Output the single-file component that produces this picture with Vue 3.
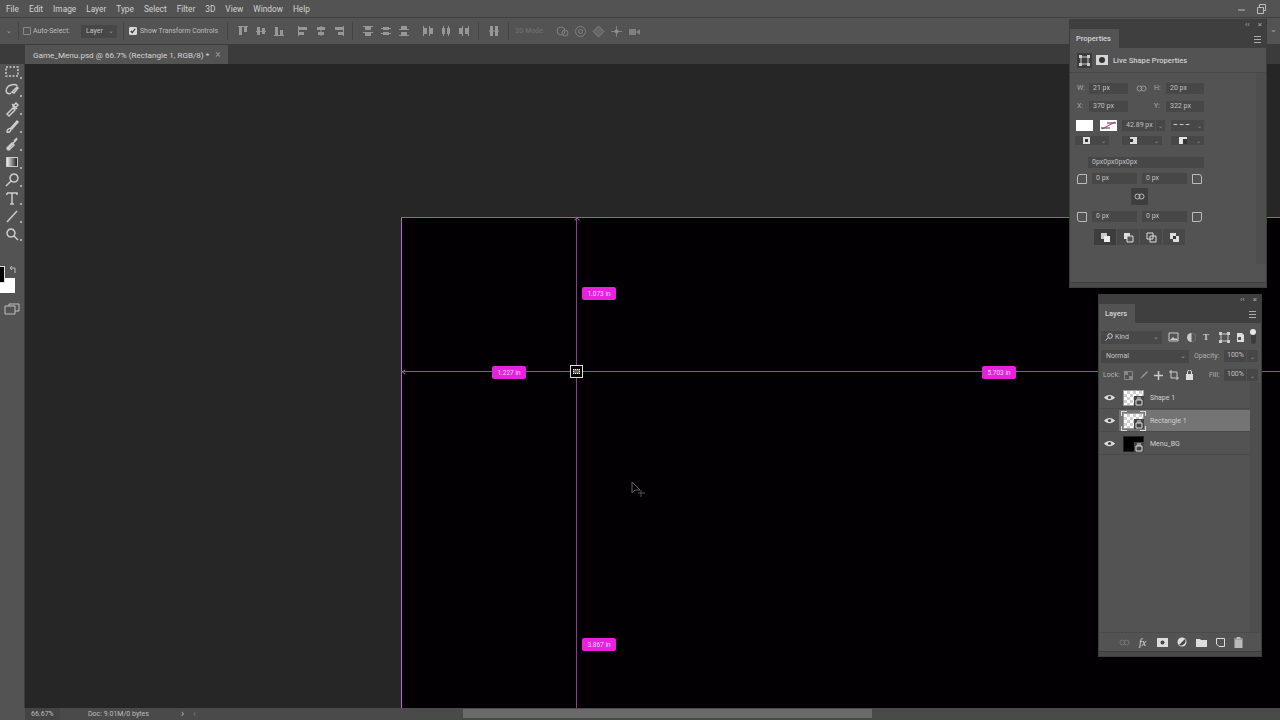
<script setup>
const menus = ['File', 'Edit', 'Image', 'Layer', 'Type', 'Select', 'Filter', '3D', 'View', 'Window', 'Help']

// align / distribute icons of the options bar
const alignGroups = [
  { cls: '', icons: ['M1 1h10v1H1zM2 2h3v8H2zM7 2h3v5H7z', 'M1 6h10v1H1zM2 2h3v8H2zM7 3h3v6H7z', 'M1 10h10v1H1zM2 2h3v8H2zM7 5h3v5H7z'] },
  { cls: 'end', sep: true, icons: ['M1 1h1v10H1zM2 2h8v3H2zM2 7h5v3H2z', 'M5.500 1h1v10h-1zM2 2h8v3H2zM3 7h6v3H3z', 'M10 1h1v10h-1zM2 2h8v3H2zM5 7h5v3H5z'] },
  { cls: '', icons: ['M1 1h10v1H1zM3 2h6v3H3zM1 7h10v1H1zM3 8h6v3H3z', 'M1 3h10v1H1zM3 2h6v3H3zM1 8h10v1H1zM3 7h6v3H3z', 'M1 4h10v1H1zM3 1h6v3H3zM1 10h10v1H1zM3 7h6v3H3z'] },
  { cls: 'end2', sep: true, icons: ['M1 1h1v10H1zM2 3h3v6H2zM7 1h1v10H7zM8 3h3v6H8z', 'M3 1h1v10H3zM2 3h3v6H2zM8 1h1v10H8zM7 3h3v6H7z', 'M4 1h1v10H4zM1 3h3v6H1zM10 1h1v10h-1zM7 3h3v6H7z'] },
  { cls: 'end2', sep: true, icons: ['M2 1h3v10H2zM7 1h3v10H7zM1 5.500h10v1H1z'] }
]

const tools = [
  { k: 'marquee', d: 'M3 4h12v9H3z', dash: true },
  { k: 'lasso', d: 'M4 12c-2-3 0-7 4-8s6 0 6 1M4 12c2 1 3 1 4 0M9 11l5-5 1 1-4 5z' },
  { k: 'drop', d: 'M4 15l6-6 2 2-6 6zM10 7l3-3 2 2-3 3zM9 5l5 5' },
  { k: 'brush', d: 'M4 15c0-3 2-4 4-3 0 2-2 4-4 3zM8 11l6-7 1 1-6 7z' },
  { k: 'heal', d: 'M4 13l5-5 2 2-5 5zM14 4L4 15M11 6l3-3' },
  { k: 'grad', d: '' },
  { k: 'dodge', d: 'M3 15l5-5M11 3a4 4 0 1 1-.01 0' },
  { k: 'type', d: 'M4 4h10v2M4 4v2M9 4v11M7 15h4' },
  { k: 'line', d: 'M4 15L14 4' },
  { k: 'zoom', d: 'M8 4a4 4 0 1 1-.01 0M11 11l4 4' }
]

const measures = [
  { text: '1.073 in', cls: 'm-top' },
  { text: '1.227 in', cls: 'm-left' },
  { text: '5.703 in', cls: 'm-right' },
  { text: '3.867 in', cls: 'm-bottom' }
]

const layers = [
  { name: 'Shape 1', thumb: 'checker' },
  { name: 'Rectangle 1', thumb: 'checker', active: true },
  { name: 'Menu_BG', thumb: 'dark' }
]
</script>

<template>
  <div class="app">
    <header class="menubar">
      <span v-for="m in menus" :key="m" class="menu-item">{{ m }}</span>
      <span class="win-btns">
        <svg width="40" height="14" viewBox="0 0 40 14"><path d="M4 8h7" stroke="#bbb" fill="none"/><path d="M23.500 5.500h6v6h-6zM25.500 5.500v-3h6v6h-2" stroke="#bbb" fill="none"/></svg>
      </span>
    </header>

    <div class="optbar">
      <span class="opt-caret">⌄</span>
      <i class="vsep"></i>
      <span class="check first"></span>
      <span class="opt-label auto">Auto-Select:</span>
      <span class="select layer-sel">Layer<em>⌄</em></span>
      <i class="vsep"></i>
      <span class="check on"><svg width="8" height="8" viewBox="0 0 8 8"><path d="M1 4l2 2 4-5" stroke="#333" stroke-width="1.600" fill="none"/></svg></span>
      <span class="opt-label show">Show Transform Controls</span>
      <i class="vsep sep-show"></i>
      <template v-for="(g, n) in alignGroups" :key="n">
        <span class="align-group" :class="g.cls">
          <svg v-for="d in g.icons" :key="d" width="12" height="12" viewBox="0 0 12 12"><path :d="d" fill="#979797"/></svg>
        </span>
        <i v-if="g.sep" class="vsep after-group"></i>
      </template>
      <span class="mode3d">3D Mode:</span>
      <span class="icons3d">
        <svg width="13" height="13" viewBox="0 0 13 13"><circle cx="5" cy="6" r="4" stroke="#808080" fill="none"/><circle cx="9" cy="8" r="3" stroke="#808080" fill="none"/></svg>
        <svg width="13" height="13" viewBox="0 0 13 13"><circle cx="6.500" cy="6.500" r="5" stroke="#808080" fill="none"/><circle cx="6.500" cy="6.500" r="2" stroke="#808080" fill="none"/></svg>
        <svg width="13" height="13" viewBox="0 0 13 13"><path d="M6.500 1l5.500 5.500-5.500 5.500L1 6.500z" stroke="#808080" fill="#666"/></svg>
        <svg width="13" height="13" viewBox="0 0 13 13"><path d="M6.500 1v11M1 6.500h11" stroke="#808080"/><circle cx="6.500" cy="6.500" r="2" fill="#909090"/></svg>
        <svg width="13" height="13" viewBox="0 0 13 13"><path d="M1 4h7v6H1zM8 7l4-3v6z" fill="#808080"/></svg>
      </span>
      <span class="opt-end">⌄</span>
    </div>

    <div class="tabbar">
      <div class="doc-tab">Game_Menu.psd @ 66.7% (Rectangle 1, RGB/8) * <span class="tab-x">×</span></div>
    </div>

    <div class="main">
      <aside class="toolbar">
        <div v-for="t in tools" :key="t.k" class="tool">
          <span v-if="t.k === 'grad'" class="grad-icon"></span>
          <svg v-else width="18" height="18" viewBox="0 1 18 18">
            <path :d="t.d" fill="none" stroke="#cdcdcd" stroke-width="1.500" :stroke-dasharray="t.dash ? '2 1.500' : null"/>
          </svg>
        </div>
        <div class="colors">
          <span class="bg-swatch"></span>
          <span class="fg-swatch"></span>
          <svg class="swap" width="9" height="9" viewBox="0 0 9 9"><path d="M1 3h5v5M1 3l2-2M1 3l2 2" stroke="#bbb" fill="none"/></svg>
        </div>
        <svg class="screen-mode" width="16" height="12" viewBox="0 0 16 12"><path d="M1 3h10v8H1zM5 3V1h10v7h-4" stroke="#c0c0c0" fill="none"/></svg>
      </aside>

      <div class="workspace">
        <div class="canvas">
          <i class="guide guide-h"></i>
          <i class="guide guide-v"></i>
          <i class="guide guide-top"></i>
          <i class="tick tick-top"></i>
          <i class="tick tick-left"></i>
          <span class="center-mark"><i></i></span>
          <span v-for="m in measures" :key="m.cls" class="measure" :class="m.cls">{{ m.text }}</span>
          <svg class="cursor" width="18" height="18" viewBox="0 0 18 18"><path d="M1 1v11l3-3h5z" stroke="#666" fill="none"/><path d="M10 9v7M7 12h7" stroke="#555"/></svg>
        </div>

        <section class="panel props">
          <div class="panel-top">‹‹ <span>×</span></div>
          <div class="panel-tabs">
            <span class="ptab">Properties</span>
            <span class="burger"></span>
          </div>
          <div class="live-row">
            <span class="live-a">
              <svg width="11" height="11" viewBox="0 0 11 11"><path d="M2 2h7v7H2z" stroke="#ccc" fill="none"/><path d="M0 0h3v3H0zM8 0h3v3H8zM0 8h3v3H0zM8 8h3v3H8z" fill="#ccc"/></svg>
            </span>
            <span class="live-b"><i></i></span>
            <span class="live-title">Live Shape Properties</span>
          </div>
          <div class="prow first-row">
            <label>W:</label><span class="field w39">21 px</span>
            <svg class="link" width="11" height="7" viewBox="0 0 11 7"><circle cx="3.500" cy="3.500" r="2.500" stroke="#999" fill="none"/><circle cx="7.500" cy="3.500" r="2.500" stroke="#999" fill="none"/></svg>
            <label>H:</label><span class="field w38">20 px</span>
          </div>
          <div class="prow">
            <label>X:</label><span class="field w39">370 px</span>
            <label class="ylab">Y:</label><span class="field w38">322 px</span>
          </div>
          <div class="prow swatches">
            <span class="white-sw"></span>
            <span class="stroke-sw"><svg width="17" height="11" viewBox="0 0 17 11"><path d="M1 8h9M7 3h9" stroke="#333"/><path d="M2 9l13-7" stroke="#e0245e"/></svg></span>
            <span class="field w33">42.89 px</span><span class="mini">⌄</span>
            <span class="stroke-style">– – –<em>⌄</em></span>
          </div>
          <div class="prow small">
            <span class="dd d1"><b class="dot"></b><em>⌄</em></span>
            <span class="dd d2"><b class="sq"></b><em>⌄</em></span>
            <span class="dd d3"><b class="sq2"></b><em>⌄</em></span>
          </div>
          <div class="field wide">0px0px0px0px</div>
          <div class="corner-row">
            <span class="corner tl"></span><span class="field c">0 px</span><span class="field c">0 px</span><span class="corner tr"></span>
          </div>
          <div class="link-btn">
            <svg width="11" height="7" viewBox="0 0 11 7"><circle cx="3.500" cy="3.500" r="2.500" stroke="#bbb" fill="none"/><circle cx="7.500" cy="3.500" r="2.500" stroke="#bbb" fill="none"/></svg>
          </div>
          <div class="corner-row">
            <span class="corner bl"></span><span class="field c">0 px</span><span class="field c">0 px</span><span class="corner br"></span>
          </div>
          <div class="path-ops">
            <span class="op on"><svg width="11" height="11" viewBox="0 0 11 11"><path d="M1 1h6v6H1z" fill="#ccc"/><path d="M4 4h6v6H4z" fill="#eee"/></svg></span>
            <span class="op"><svg width="11" height="11" viewBox="0 0 11 11"><path d="M1 1h6v6H1z" fill="#ddd"/><path d="M4 4h6v6H4z" fill="#555" stroke="#ddd"/></svg></span>
            <span class="op"><svg width="11" height="11" viewBox="0 0 11 11"><path d="M1 1h6v6H1zM4 4h6v6H4z" fill="none" stroke="#ddd"/></svg></span>
            <span class="op"><svg width="11" height="11" viewBox="0 0 11 11"><path d="M1 1h6v6H1z" fill="#ddd"/><path d="M4 4h6v6H4z" fill="#ddd"/><path d="M4 4h3v3H4z" fill="#333"/></svg></span>
          </div>
          <i class="props-scroll"></i>
          <div class="grip"></div>
        </section>

        <section class="panel layers">
          <div class="panel-top">‹‹ <span>×</span></div>
          <div class="panel-tabs">
            <span class="ptab">Layers</span>
            <span class="burger"></span>
          </div>
          <div class="filter-row">
            <span class="select kind">
              <span class="kind-label">
                <svg width="8" height="8" viewBox="0 0 8 8"><circle cx="5" cy="3" r="2.300" stroke="#ccc" fill="none"/><path d="M3.300 4.700L.5 7.500" stroke="#ccc"/></svg>
                Kind
              </span>
              <em>⌄</em>
            </span>
            <span class="filter-icons">
              <svg width="11" height="10" viewBox="0 0 11 10"><path d="M1 1h9v8H1z" stroke="#ccc" fill="none"/><path d="M2 8l3-3 2 2 1-1 2 2z" fill="#ccc"/></svg>
              <svg width="11" height="11" viewBox="0 0 11 11"><circle cx="5.500" cy="5.500" r="4.500" fill="#ccc"/><path d="M5.500 1a4.500 4.500 0 0 1 0 9z" fill="#555"/></svg>
              <span class="t-icon">T</span>
              <svg width="11" height="11" viewBox="0 0 11 11"><path d="M2 2h7v7H2z" stroke="#ccc" fill="none"/><path d="M0 0h3v3H0zM8 0h3v3H8zM0 8h3v3H0zM8 8h3v3H8z" fill="#ccc"/></svg>
              <svg width="9" height="11" viewBox="0 0 9 11"><path d="M1 1h5l2 2v7H1z" fill="#ddd"/><path d="M2 5h3v3H2z" fill="#555"/></svg>
            </span>
            <span class="toggle"><i></i></span>
          </div>
          <div class="blend-row">
            <span class="select normal">Normal<em>⌄</em></span>
            <span class="lbl opacity-lbl">Opacity:</span>
            <span class="field pct">100%</span><span class="mini pct-mini">⌄</span>
          </div>
          <div class="lock-row">
            <span class="lbl lock-lbl">Lock:</span>
            <span class="lock-icons">
              <svg width="9" height="9" viewBox="0 0 9 9"><path d="M0 0h4v4H0zM5 5h4v4H5z" fill="#888"/><path d="M.5.500h8v8h-8z" stroke="#888" fill="none"/></svg>
              <svg width="9" height="9" viewBox="0 0 9 9"><path d="M1 8l2-3 5-5 1 1-5 5z" fill="#999"/></svg>
              <svg width="9" height="9" viewBox="0 0 9 9"><path d="M4.500 0v9M0 4.500h9" stroke="#ccc" stroke-width="1.500"/></svg>
              <svg width="10" height="10" viewBox="0 0 10 10"><path d="M2 0v8h8M0 2h8v8" stroke="#ccc" fill="none"/></svg>
              <svg width="9" height="10" viewBox="0 0 9 10"><path d="M1 4h7v6H1z" fill="#ddd"/><path d="M2.500 4V2a2 2 0 0 1 4 0v2" stroke="#ddd" fill="none"/></svg>
            </span>
            <span class="lbl fill-lbl">Fill:</span>
            <span class="field pct">100%</span><span class="mini pct-mini">⌄</span>
          </div>
          <div class="layer-list">
            <div v-for="l in layers" :key="l.name" class="layer" :class="{ active: l.active }">
              <span class="eye-col">
                <svg width="11" height="7" viewBox="0 0 11 7"><path d="M0 3.500C3 0 8 0 11 3.500 8 7 3 7 0 3.500z" fill="#ddd"/><circle cx="5.500" cy="3.500" r="1.600" fill="#444"/></svg>
              </span>
              <span class="layer-body">
                <span class="thumb" :class="l.thumb">
                  <svg class="badge" width="10" height="10" viewBox="0 0 10 10"><path d="M0 0h10v10H0z" fill="#444"/><path d="M2 4h6v5H2zM4 1v3M6 1v3" stroke="#ddd" fill="none"/></svg>
                </span>
                <span class="layer-name">{{ l.name }}</span>
              </span>
            </div>
          </div>
          <div class="layers-foot">
            <svg width="11" height="7" viewBox="0 0 11 7"><circle cx="3.500" cy="3.500" r="2.500" stroke="#777" fill="none"/><circle cx="7.500" cy="3.500" r="2.500" stroke="#777" fill="none"/></svg>
            <span class="fx">fx</span>
            <svg width="11" height="9" viewBox="0 0 11 9"><path d="M0 0h11v9H0z" fill="#ddd"/><circle cx="5.500" cy="4.500" r="2" fill="#444"/></svg>
            <svg width="10" height="10" viewBox="0 0 10 10"><circle cx="5" cy="5" r="4.500" fill="#ddd"/><path d="M8 2L2 8a4.500 4.500 0 0 0 6-6z" fill="#444"/></svg>
            <svg width="11" height="9" viewBox="0 0 11 9"><path d="M0 1h4l1 1h6v7H0z" fill="#ddd"/></svg>
            <svg width="9" height="9" viewBox="0 0 9 9"><path d="M.5.500h8v8H3L.5 6z" stroke="#ddd" fill="none"/></svg>
            <svg width="9" height="11" viewBox="0 0 9 11"><path d="M1 3h7v8H1zM0 2h9M3 2V0h3v2" fill="#bbb" stroke="#bbb"/></svg>
          </div>
          <div class="grip"></div>
        </section>
      </div>
    </div>

    <footer class="statusbar">
      <span class="st-toolgap"></span>
      <span class="zoomval">66.67%</span>
      <span class="docinfo">Doc: 9.01M/0 bytes</span>
      <span class="st-arrow">›</span>
      <span class="st-arrow dim">‹</span>
      <span class="scroll-track"><i></i></span>
    </footer>
  </div>
</template>

<style>
html, body { margin: 0; background: #262626; overflow: hidden; }
</style>

<style scoped>
.app {
  width: 1280px;
  height: 720px;
  display: flex;
  flex-direction: column;
  font-family: Roboto, "Liberation Sans", sans-serif;
  color: #c8c8c8;
  overflow: hidden;
  font-size: 8px;
}
.menubar {
  height: 17px;
  background: #535353;
  display: flex;
  align-items: center;
  padding-left: 6px;
  gap: 10px;
  font-size: 8.300px;
  color: #d2d2d2;
}
.win-btns { margin-left: auto; display: flex; margin-right: 6px; }
.optbar {
  height: 26px;
  background: #535353;
  border-top: 1px solid #404040;
  border-bottom: 1px solid #3c3c3c;
  display: flex;
  align-items: center;
  font-size: 6.900px;
}
.opt-caret { width: 18px; text-align: center; color: #aaa; }
.opt-end { margin-left: auto; width: 13px; height: 26px; line-height: 24px; border-left: 1px solid #484848; color: #aaa; text-align: center; font-size: 8px; }
.vsep { width: 1px; height: 18px; background: #454545; flex-shrink: 0; }
.check {
  width: 6px; height: 6px; border: 1px solid #888; border-radius: 1px;
  margin: 0 3px 0 5px; display: flex; align-items: center; justify-content: center;
  flex-shrink: 0;
}
.check.first { margin: 0 2px 0 4px; }
.check.on { background: #d8d8d8; border-color: #d8d8d8; }
.opt-label { color: #bdbdbd; white-space: nowrap; }
.opt-label.auto { width: 37px; margin-right: 11px; }
.opt-label.show { width: 77px; margin-right: 10px; }
.select {
  background: #474747; color: #c4c4c4; display: inline-flex; align-items: center; justify-content: space-between;
  box-sizing: border-box; padding: 0 3px 0 5px; height: 13px; font-size: 7px;
}
.select em, .stroke-style em, .dd em { font-style: normal; color: #999; }
.layer-sel { width: 36px; margin-right: 6px; }
.sep-show { margin-right: 9px; }
.align-group { display: flex; gap: 6px; margin-right: 12px; }
.align-group.end { margin-right: 7px; }
.align-group.end2 { margin-right: 8px; }
.after-group { margin-right: 9px; }
.mode3d { color: #6e6e6e; width: 30px; margin: 0 11px 0 -3px; font-weight: 500; white-space: nowrap; }
.icons3d { display: flex; gap: 5px; }
.tabbar { height: 19px; background: #3b3b3b; display: flex; padding-left: 25px; flex-shrink: 0; }
.doc-tab {
  background: #535353; width: 203px; padding-left: 8px; box-sizing: border-box; display: flex; align-items: center; white-space: pre;
  font-size: 8.100px; color: #d4d4d4;
}
.tab-x { margin-left: 4px; color: #999; font-size: 10px; }
.main { flex: 1; display: flex; min-height: 0; }
.toolbar {
  width: 25px; background: #535353; border-right: 1px solid #3c3c3c; box-sizing: border-box;
  display: flex; flex-direction: column; align-items: center;
  flex-shrink: 0;
}
.tool { height: 18px; width: 18px; display: flex; align-items: center; justify-content: center; position: relative; }
.tool::after { content: ''; position: absolute; right: -1px; bottom: 3px; width: 2px; height: 2px; background: #aaa; }
.grad-icon { width: 10px; height: 8px; margin-top: -2px; background: linear-gradient(90deg, #eee, #222); border: 1px solid #ccc; }
.colors { position: relative; height: 30px; width: 25px; margin-top: 20px; flex-shrink: 0; }
.bg-swatch { position: absolute; left: 0; top: 14px; width: 15px; height: 15px; background: #fff; }
.fg-swatch { position: absolute; left: 0; top: 2px; width: 4px; height: 15px; background: #000; border: 1px solid #ddd; border-left: 0; }
.swap { position: absolute; left: 9px; top: 1px; }
.screen-mode { margin-top: 9px; }
.workspace {
  flex: 1; background: #262626; position: relative; min-width: 0;
  padding: 153px 0 0 376px;
}
.canvas { height: 100%; background: #020002; position: relative; box-sizing: border-box; }
.guide { position: absolute; background: #9a4a9a; }
.guide-h { left: 0; right: 0; top: 154px; height: 1px; }
.guide-v { left: 175px; top: 0; bottom: 0; width: 1px; background: #84408a; }
.guide-top { left: 0; right: 0; top: 0; height: 1px; background: #b050b0; }
.canvas::before { content: ''; position: absolute; left: 0; top: 0; bottom: 0; width: 1px; background: #b868c8; }
.tick { position: absolute; width: 3px; height: 3px; border-top: 1px solid #a050a0; border-left: 1px solid #a050a0; transform: rotate(45deg); }
.tick-top { left: 174px; top: 1px; }
.tick-left { left: 2px; top: 153px; transform: rotate(-45deg); }
.center-mark {
  position: absolute; left: 169px; top: 148px; width: 11px; height: 11px; border: 1px solid #ddd; background: #000;
  display: flex; align-items: center; justify-content: center;
}
.center-mark i { width: 7px; height: 5px; border: 1px dotted #fff; box-sizing: border-box; background: #666; }
.measure {
  position: absolute; width: 34px; height: 13px; border-radius: 2px; background: #e820e0; color: #f2d8f2;
  font-size: 6.500px; display: flex; align-items: center; justify-content: center;
}
.m-top { left: 181px; top: 70px; }
.m-left { left: 91px; top: 149px; }
.m-right { left: 581px; top: 149px; }
.m-bottom { left: 181px; top: 421px; }
.cursor { position: absolute; left: 230px; top: 264px; }
.panel {
  position: absolute; background: #535353; border: 1px solid #3d3d3d; box-sizing: border-box;
  display: flex; flex-direction: column;
}
.props { left: 1044px; top: -45px; width: 198px; height: 269px; }
.layers { left: 1073px; top: 230px; width: 164px; height: 363px; }
.panel-top {
  height: 9px; background: #3f3f3f; text-align: right; padding-right: 4px; font-size: 8px; line-height: 9px; color: #aaa;
  flex-shrink: 0;
}
.panel-top span { margin-left: 6px; }
.panel-tabs { height: 19px; background: #3f3f3f; display: flex; justify-content: space-between; flex-shrink: 0; }
.ptab { background: #535353; padding: 0 8px 0 6px; line-height: 19px; font-weight: 500; font-size: 7.500px; color: #d4d4d4; }
.burger { width: 7px; height: 5px; border-top: 1px solid #aaa; border-bottom: 1px solid #aaa; margin: 7px 5px 0 0; background: linear-gradient(#aaa, #aaa) center/100% 1px no-repeat; }
.live-row { height: 25px; display: flex; align-items: center; padding-left: 7px; gap: 3px; border-bottom: 1px solid #474747; flex-shrink: 0; box-sizing: border-box; }
.live-a { width: 15px; height: 15px; background: #3c3c3c; display: flex; align-items: center; justify-content: center; }
.live-b { width: 12px; height: 10px; background: #d5d5d5; display: flex; align-items: center; justify-content: center; margin-left: 1px; }
.live-b i { width: 6px; height: 6px; background: #333; border-radius: 50%; }
.live-title { font-weight: 500; font-size: 7.600px; color: #cfcfcf; margin-left: 2px; }
.prow { display: flex; align-items: center; height: 18px; padding-left: 7px; font-size: 7px; color: #a8a8a8; flex-shrink: 0; }
.prow label { width: 12px; }
.first-row { margin-top: 6px; }
.field {
  background: #474747; color: #c0c0c0; height: 11px; line-height: 11px; font-size: 7px; padding-left: 4px; box-sizing: border-box;
  display: inline-block;
}
.w39 { width: 39px; }
.w38 { width: 38px; }
.w33 { width: 33px; margin-left: 5px; }
.link { margin: 0 7px 0 8px; }
.prow .ylab { margin-left: 26px; }
.swatches { height: 16px; margin-top: 2px; padding-left: 6px; }
.white-sw { width: 17px; height: 11px; background: #fff; }
.stroke-sw { width: 17px; height: 11px; background: #fff; margin-left: 7px; display: flex; }
.mini { background: #474747; width: 9px; height: 11px; margin-left: 1px; display: flex; align-items: center; justify-content: center; font-size: 6px; color: #999; }
.stroke-style { width: 33px; height: 11px; background: #474747; margin-left: 6px; color: #ddd; font-size: 7px; font-weight: 700; display: flex; justify-content: space-between; padding: 0 2px; box-sizing: border-box; line-height: 11px; white-space: nowrap; overflow: hidden; }
.stroke-style em { font-weight: 400; font-size: 6px; }
.small { height: 11px; padding-left: 5px; margin-top: 2px; }
.dd { background: #474747; height: 9px; display: flex; align-items: center; justify-content: space-between; padding: 0 3px 0 8px; box-sizing: border-box; font-size: 6px; }
.d1 { width: 34px; }
.d2 { width: 40px; margin-left: 13px; }
.d3 { width: 33px; margin-left: 9px; }
.dot { width: 7px; height: 7px; border: 2px solid #ddd; background: #333; box-sizing: border-box; }
.sq { width: 7px; height: 7px; background: linear-gradient(#ddd, #ddd) 0 0/100% 2px no-repeat, linear-gradient(#ddd, #ddd) 0 100%/100% 2px no-repeat, linear-gradient(90deg, #333 3px, #ddd 3px); }
.sq2 { width: 8px; height: 7px; background: linear-gradient(#e4e4e4, #e4e4e4) 0 0/100% 2px no-repeat, linear-gradient(90deg, #e4e4e4 4px, #333 4px); }
.wide { margin: 11px 0 0 18px; width: 116px; flex-shrink: 0; }
.corner-row { display: flex; align-items: center; margin: 5px 0 0 7px; gap: 5px; height: 11px; flex-shrink: 0; }
.corner { width: 8px; height: 8px; border: 1px solid #bbb; }
.tl { border-top-left-radius: 3px; }
.tr { border-top-right-radius: 3px; }
.bl { border-bottom-left-radius: 3px; }
.br { border-bottom-right-radius: 3px; }
.field.c { width: 45px; }
.link-btn { width: 17px; height: 17px; background: #3e3e3e; margin: 4px 0 1px 61px; display: flex; align-items: center; justify-content: center; flex-shrink: 0; }
.path-ops { display: flex; margin: 7px 0 0 24px; gap: 1px; flex-shrink: 0; }
.op { width: 22px; height: 16px; background: #484848; display: flex; align-items: center; justify-content: center; }
.op.on { background: #3d3d3d; }
.props-scroll { position: absolute; left: 186px; top: 53px; width: 10px; bottom: 23px; background: #4e4e4e; }
.grip { margin-top: auto; height: 4px; border-top: 1px solid #3d3d3d; background: #4a4a4a; flex-shrink: 0; }
.filter-row { display: flex; align-items: center; padding: 7px 0 0 2px; height: 14px; }
.kind { width: 61px; height: 13px; background: #484848; padding-left: 4px; }
.kind-label { display: flex; align-items: center; gap: 2px; }
.filter-icons { display: flex; align-items: center; gap: 6.500px; margin-left: 6px; }
.t-icon { font-size: 9px; font-weight: 700; color: #ccc; font-family: "Liberation Serif", serif; width: 9px; }
.toggle { width: 5px; height: 13px; border-radius: 3px; background: #3d3d3d; margin-left: 6px; position: relative; }
.toggle i { position: absolute; left: -1px; top: -2px; width: 6px; height: 6px; border-radius: 50%; background: #e8e8e8; }
.blend-row { display: flex; align-items: center; padding: 5px 0 0 2px; height: 14px; }
.normal { width: 88px; height: 13px; }
.lbl { color: #b0b0b0; font-size: 7px; }
.opacity-lbl { width: 26px; margin: 0 4px 0 5px; }
.pct { width: 22px; height: 12px; padding-left: 3px; }
.pct-mini { width: 11px; height: 12px; }
.lock-row { display: flex; align-items: center; padding: 5px 0 0 4px; height: 14px; }
.lock-lbl { width: 20px; }
.lock-icons { display: flex; align-items: center; gap: 6px; margin-left: 1px; }
.fill-lbl { width: 11px; margin: 0 4px 0 15px; }
.layer-list {
  flex: 1; display: flex; flex-direction: column; padding-top: 5px;
  background: linear-gradient(90deg, #535353 151px, #4e4e4e 151px);
}
.layer { display: flex; height: 22px; margin-bottom: 1px; width: 151px; box-sizing: border-box; border-bottom: 1px solid #4a4a4a; font-size: 7px; color: #d0d0d0; }
.eye-col { width: 20px; display: flex; align-items: center; justify-content: center; }
.layer-body { flex: 1; display: flex; align-items: center; padding-left: 4px; }
.layer.active .layer-body { background: #747474; }
.thumb { width: 21px; height: 16px; margin-right: 6px; position: relative; border: 1px solid #999; box-sizing: border-box; }
.thumb.checker { background: repeating-conic-gradient(#cfcfcf 0 25%, #fff 0 50%) 0 0/6px 6px; }
.thumb.dark { background: #000; border-color: #222; }
.badge { position: absolute; right: -1px; bottom: -1px; }
.layer.active .thumb::before {
  content: ''; position: absolute; inset: -3px;
  background:
    linear-gradient(#ddd, #ddd) 0 0/6px 1px, linear-gradient(#ddd, #ddd) 0 0/1px 5px,
    linear-gradient(#ddd, #ddd) 100% 0/6px 1px, linear-gradient(#ddd, #ddd) 100% 0/1px 5px,
    linear-gradient(#ddd, #ddd) 0 100%/6px 1px, linear-gradient(#ddd, #ddd) 0 100%/1px 5px,
    linear-gradient(#ddd, #ddd) 100% 100%/6px 1px, linear-gradient(#ddd, #ddd) 100% 100%/1px 5px;
  background-repeat: no-repeat;
}
.layers-foot { height: 18px; border-top: 1px solid #4a4a4a; display: flex; align-items: center; justify-content: flex-end; gap: 9px; padding-right: 18px; flex-shrink: 0; }
.fx { font-family: "Liberation Serif", serif; font-style: italic; font-size: 10px; color: #ddd; width: 9px; }
.statusbar {
  height: 12px; background: #4a4a4a; display: flex; align-items: center; font-size: 7px; color: #bdbdbd; flex-shrink: 0;
}
.st-toolgap { width: 25px; height: 100%; background: #535353; }
.zoomval { width: 35px; padding-left: 6px; box-sizing: border-box; background: #444; height: 100%; line-height: 12px; }
.docinfo { margin-left: 28px; width: 93px; }
.st-arrow { width: 12px; font-size: 10px; line-height: 12px; }
.st-arrow.dim { color: #777; }
.scroll-track { flex: 1; height: 100%; margin-left: 258px; }
.scroll-track i { display: block; width: 409px; height: 9px; background: #6a6a6a; margin-top: 1px; }
</style>
